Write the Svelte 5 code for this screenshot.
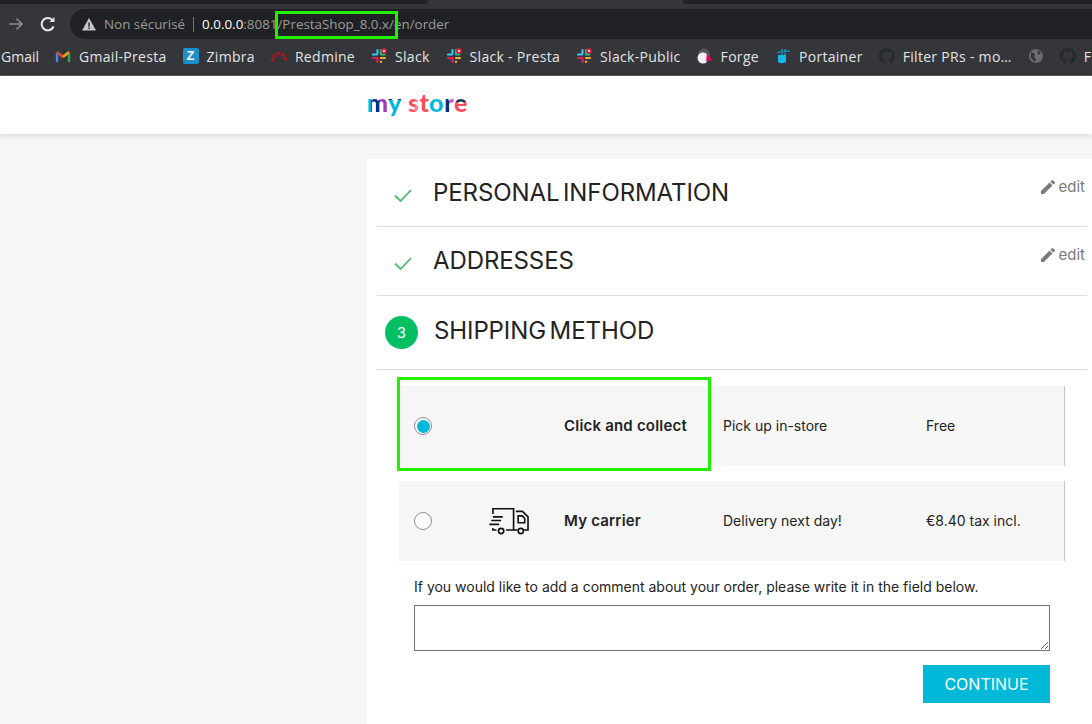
<script>
  const sections = [
    { title: 'PERSONAL INFORMATION', cls: 'first' },
    { title: 'ADDRESSES', cls: 'second' }
  ];
  // each letter of the logo is two-toned
  const logo = [
    ['m', 'linear-gradient(90deg, #00b9d8 20%, #0a2d8a 20% 62%, #a23cb0 62%)'],
    ['y', 'linear-gradient(180deg, #0a2d8a 45%, #00b9d8 45%)'],
    [' ', 'none'],
    ['s', 'linear-gradient(90deg, #ff4c5b 60%, #ff7fa0 60%)'],
    ['t', 'linear-gradient(180deg, #ff4c5b 100%, #ff4c5b 100%)'],
    ['o', 'linear-gradient(90deg, #00b9d8 100%, #00b9d8 100%)'],
    ['r', 'linear-gradient(90deg, #0a2d8a 50%, #c74fc0 50%)'],
    ['e', 'linear-gradient(180deg, #0d3550 50%, #ff4c5b 50%)']
  ];
  const bookmarks = [
    { icon: 'gmail', label: 'Gmail-Presta' },
    { icon: 'zimbra', label: 'Zimbra' },
    { icon: 'redmine', label: 'Redmine' },
    { icon: 'slack', label: 'Slack' },
    { icon: 'slack', label: 'Slack - Presta' },
    { icon: 'slack', label: 'Slack-Public' },
    { icon: 'forge', label: 'Forge' },
    { icon: 'portainer', label: 'Portainer' },
    { icon: 'github', label: 'Filter PRs - mo…' },
    { icon: 'globe', label: '' },
    { icon: 'github', label: 'F' }
  ];
</script>

<div class="page">
  <div class="browser">
    <div class="tabstrip">
      <div class="tab tab-left"></div>
      <div class="tab tab-right"></div>
    </div>
    <div class="toolbar">
      <svg class="nav" width="20" height="20" viewBox="0 0 20 20" fill="none" stroke="#8a8b8e" stroke-width="1.7">
        <path d="M3 10h13M10.500 4.500 16 10l-5.500 5.500" />
      </svg>
      <svg class="nav reload" width="20" height="20" viewBox="0 0 20 20" fill="none" stroke="#e8eaed" stroke-width="2">
        <path d="M15.600 12.500a6.200 6.200 0 1 1-.8-6.200" />
        <path d="M16.500 3v5h-5z" fill="#e8eaed" stroke="none" />
      </svg>
      <div class="omnibox">
        <svg width="16" height="16" viewBox="0 0 16 16"><path d="M8 2 15 14.500H1z" fill="#c4c6c9" /><path d="M7.300 6.500h1.400v4.200H7.300zM7.300 11.500h1.400v1.400H7.300z" fill="#202124" /></svg>
        <span class="insecure">Non sécurisé</span>
        <span class="sep"></span>
        <span class="url"><b>0.0.0.0</b>:8081/PrestaShop_8.0.x/en/order</span>
      </div>
    </div>
    <div class="bookmarks">
      <span class="bm-text cut">Gmail</span>
      {#each bookmarks as b}
        <div class="bookmark">
          {#if b.icon === 'gmail'}
            <svg width="16" height="16" viewBox="0 0 16 16" fill="none" stroke-width="2.400">
              <path d="M2 14V5" stroke="#4285f4" /><path d="M14 14V5" stroke="#34a853" />
              <path d="M2 4l6 5" stroke="#ea4335" /><path d="M8 9l6-5" stroke="#f0a020" />
            </svg>
          {:else if b.icon === 'zimbra'}
            <span class="zimbra">Z</span>
          {:else if b.icon === 'redmine'}
            <svg width="16" height="16" viewBox="0 0 16 16" fill="none" stroke="#b3151b" stroke-width="3" stroke-dasharray="3.500 1">
              <path d="M1.500 13.500a6.500 8 0 0 1 13 0" />
            </svg>
          {:else if b.icon === 'slack'}
            <svg width="16" height="16" viewBox="0 0 16 16" fill="none" stroke-width="2.200" stroke-linecap="round">
              <path d="M6.500 2v3.500M2 6.500h4" stroke="#36c5f0" />
              <path d="M2 10h4.500M6.500 10v4" stroke="#e01e5a" />
              <path d="M10 2v4.500M13.500 6.500H10" stroke="#2eb67d" />
              <path d="M10 10h4M10 14v-.5" stroke="#ecb22e" />
              <circle cx="13" cy="3" r="2.800" fill="#e01e3c" stroke="none" />
              <circle cx="13" cy="3" r="1" fill="#fff" stroke="none" />
            </svg>
          {:else if b.icon === 'forge'}
            <svg width="16" height="16" viewBox="0 0 16 16">
              <circle cx="7" cy="6.500" r="6" fill="#55575a" />
              <circle cx="6" cy="10" r="5.500" fill="#f2f2f2" />
              <circle cx="5" cy="6" r="1.500" fill="#f2f2f2" />
              <path d="M10 5l5 7-6 1.500z" fill="#df0067" />
            </svg>
          {:else if b.icon === 'portainer'}
            <svg width="16" height="16" viewBox="0 0 16 16" fill="none">
              <path d="M2 4.500 15 3M7 1v6M10 1v6" stroke="#13a3dc" stroke-width="1.200" />
              <path d="M3 7h8v6a2 2 0 0 1-2 2H5a2 2 0 0 1-2-2z" fill="#13b5ea" />
            </svg>
          {:else if b.icon === 'github'}
            <svg width="16" height="16" viewBox="0 0 16 16">
              <path fill="#24292e" d="M8 0C3.580 0 0 3.580 0 8c0 3.540 2.290 6.530 5.470 7.590.4.070.55-.17.55-.38 0-.19-.01-.82-.01-1.490-2.010.37-2.530-.49-2.690-.94-.09-.23-.48-.94-.82-1.130-.28-.15-.68-.52-.01-.53.63-.01 1.080.58 1.230.82.720 1.210 1.870.870 2.330.660.070-.520.280-.870.510-1.070-1.780-.2-3.640-.890-3.640-3.950 0-.870.310-1.590.820-2.150-.08-.2-.36-1.020.080-2.120 0 0 .670-.210 2.200.820.640-.180 1.320-.270 2-.270s1.360.090 2 .270c1.530-1.040 2.200-.820 2.200-.820.440 1.100.160 1.920.080 2.120.510.560.820 1.270.820 2.150 0 3.070-1.870 3.750-3.650 3.950.290.250.540.730.540 1.480 0 1.070-.01 1.930-.01 2.200 0 .210.150.460.550.380A8.010 8.010 0 0 0 16 8c0-4.420-3.580-8-8-8z" />
            </svg>
          {:else}
            <svg width="16" height="16" viewBox="0 0 16 16">
              <circle cx="8" cy="8" r="7" fill="#6a6c70" />
              <path d="M3 4l4 2-1 3 2 2-1 3-4-4zM10 2l3 3-3 2z" fill="#35363a" />
            </svg>
          {/if}
          {#if b.label}<span class="bm-text">{b.label}</span>{/if}
        </div>
      {/each}
    </div>
  </div>

  <header class="store-header">
    <div class="logo">{#each logo as [ch, paint]}<span style="background-image: {paint}">{ch}</span>{/each}</div>
  </header>

  <main class="content">
    <section class="card">
      {#each sections as s}
        <div class="step done {s.cls}">
          <svg class="check" width="20" height="20" viewBox="0 0 20 20" fill="none" stroke="#4cbb6c" stroke-width="1.800">
            <path d="M2 10.500l5.500 5.500L18 5" />
          </svg>
          <h1>{s.title}</h1>
          <span class="edit">
            <svg width="14" height="14" viewBox="3 3 18 18" fill="#7a7a7a">
              <path d="M3 17.250V21h3.750L17.810 9.940l-3.750-3.750L3 17.250zM20.710 7.040a1 1 0 0 0 0-1.410l-2.340-2.340a1 1 0 0 0-1.410 0l-1.830 1.830 3.750 3.750 1.830-1.830z" />
            </svg>
            edit
          </span>
        </div>
      {/each}

      <div class="step current">
        <span class="badge">3</span>
        <h1>SHIPPING METHOD</h1>
      </div>

      <div class="shipping">
        <div class="carrier">
          <span class="radio checked"></span>
          <span class="logo-cell"></span>
          <strong>Click and collect</strong>
          <span class="delay">Pick up in-store</span>
          <span class="price">Free</span>
        </div>
        <div class="carrier">
          <span class="radio"></span>
          <span class="logo-cell">
            <svg width="41" height="28" viewBox="280 95 125 85" fill="none" stroke="#111" stroke-width="5">
              <path d="M295 116v-16h63v65h-23M306 165h-11v-6" />
              <path d="M365 108h20l17 17v40h-12M370 165h-12" />
              <path d="M372 122h13l7 8v13h-20z" />
              <circle cx="320" cy="168" r="8" /><circle cx="380" cy="168" r="8" />
              <path d="M295 125h30M290 136h30M284 148h30" />
            </svg>
          </span>
          <strong>My carrier</strong>
          <span class="delay">Delivery next day!</span>
          <span class="price">€8.40 tax incl.</span>
        </div>
      </div>

      <form class="comment">
        <label for="delivery-message">If you would like to add a comment about your order, please write it in the field below.</label>
        <textarea id="delivery-message"></textarea>
        <button type="button">CONTINUE</button>
      </form>
    </section>
  </main>

  <!-- annotations drawn over the screenshot -->
  <div class="mark mark-url"></div>
  <div class="mark mark-carrier"></div>
</div>

<style>
  :global(body) {
    margin: 0;
    background: #f6f6f6;
  }
  .page {
    position: relative;
    width: 1092px;
    height: 724px;
    overflow: hidden;
    font-family: Inter, "Liberation Sans", sans-serif;
    color: #232323;
  }

  /* browser chrome */
  .browser {
    background: #35363a;
    height: 75px;
    display: flex;
    flex-direction: column;
    border-bottom: 1px solid #55565a;
  }
  .tabstrip {
    height: 9px;
    display: flex;
    justify-content: space-between;
  }
  .tab {
    height: 4px;
    background: #202124;
  }
  .tab-left {
    width: 428px;
    border-bottom-right-radius: 5px;
  }
  .tab-right {
    width: 409px;
    border-bottom-left-radius: 5px;
  }
  .toolbar {
    height: 30px;
    display: flex;
    align-items: center;
    padding-left: 6px;
  }
  .nav {
    flex-shrink: 0;
  }
  .reload {
    margin-left: 12px;
  }
  .omnibox {
    flex: 1;
    height: 30px;
    margin-left: 12px;
    padding-left: 11px;
    background: #202124;
    border-radius: 15px 0 0 15px;
    display: flex;
    align-items: center;
    font-family: "Open Sans", sans-serif;
    font-size: 13.400px;
    color: #9a9b9e;
  }
  .insecure {
    margin-left: 7px;
  }
  .sep {
    width: 1px;
    height: 15px;
    background: #75767a;
    margin: 0 8px 0 8px;
  }
  .url b {
    font-weight: 400;
    color: #fff;
  }
  .bookmarks {
    height: 36px;
    display: flex;
    align-items: center;
    gap: 16px;
    padding: 0 0 2px 1px;
    box-sizing: border-box;
    white-space: nowrap;
    overflow: hidden;
  }
  .bookmark {
    display: flex;
    align-items: center;
    gap: 8px;
    flex-shrink: 0;
  }
  .bm-text {
    font-family: "Open Sans", sans-serif;
    font-size: 14px;
    letter-spacing: 0.3px;
    color: #e3e4e6;
  }
  .bm-text.cut {
    letter-spacing: 0;
  }
  .zimbra {
    width: 16px;
    height: 16px;
    border-radius: 2px;
    background: #1b8fc9;
    color: #fff;
    font: 700 13px/16px "Liberation Sans", sans-serif;
    text-align: center;
  }

  /* store header */
  .store-header {
    height: 58px;
    background: #fff;
    box-shadow: 0 2px 5px rgba(0, 0, 0, 0.11);
    position: relative;
    padding-left: 367px;
    display: flex;
    align-items: center;
  }
  .logo {
    font-family: Lato, sans-serif;
    font-weight: 900;
    font-size: 25px;
    line-height: 1;
    letter-spacing: 0.5px;
    white-space: pre;
    margin-top: -6px;
  }
  .logo span {
    -webkit-background-clip: text;
    background-clip: text;
    color: transparent;
  }

  /* checkout */
  .content {
    padding: 25px 0 0 367px;
  }
  .card {
    background: #fff;
    padding: 0 5px 0 10px;
    height: 565px;
  }
  .step {
    display: flex;
    align-items: center;
    border-bottom: 1px solid #dedede;
    box-sizing: border-box;
    position: relative;
  }
  .step.first {
    height: 68px;
  }
  .step.second {
    height: 69px;
  }
  .step.current {
    height: 74px;
    padding-left: 8px;
  }
  .step.current h1 {
    margin-top: -3px;
  }
  .check {
    margin-left: 16px;
    margin-top: 4px;
  }
  h1 {
    margin: 0;
    font-size: 24px;
    font-weight: 400;
    letter-spacing: -0.1px;
    word-spacing: -3px;
    line-height: 1;
    color: #232323;
  }
  .done h1 {
    margin-left: 20px;
  }
  .current h1 {
    margin-left: 16px;
  }
  .badge {
    width: 33px;
    height: 33px;
    border-radius: 50%;
    background: #00bf63;
    color: #fff;
    font-size: 15px;
    line-height: 33px;
    text-align: center;
  }
  .edit {
    position: absolute;
    right: 2px;
    top: 18px;
    display: flex;
    align-items: center;
    gap: 4px;
    font-size: 15px;
    color: #7a7a7a;
  }
  .shipping {
    padding: 16px 22px 0 22px;
    display: flex;
    flex-direction: column;
    gap: 15px;
  }
  .carrier {
    height: 80px;
    background: #f6f6f6;
    border-right: 1px solid #c8c8c8;
    display: grid;
    grid-template-columns: 48px 102px 159px 203px 1fr;
    align-items: center;
    padding-left: 15px;
    font-size: 14px;
  }
  .radio {
    width: 16px;
    height: 16px;
    border: 1px solid #8f8f8f;
    border-radius: 50%;
    background: #fff;
    position: relative;
  }
  .radio.checked::after {
    content: '';
    position: absolute;
    inset: 1.500px;
    border-radius: 50%;
    background: #00b9d8;
  }
  .logo-cell {
    display: flex;
    margin-left: 26px;
  }
  .carrier strong {
    font-weight: 600;
    font-size: 15px;
    letter-spacing: 0.2px;
    margin-bottom: 2px;
  }
  .delay,
  .price {
    margin-bottom: 2px;
  }
  .comment {
    padding: 17px 37px 0;
    display: flex;
    flex-direction: column;
    align-items: flex-start;
  }
  .comment label {
    font-size: 14px;
    line-height: 18px;
  }
  textarea {
    display: block;
    width: 636px;
    height: 46px;
    margin-top: 9px;
    box-sizing: border-box;
    border: 1px solid #767676;
    background: #fff;
  }
  button {
    align-self: flex-end;
    width: 127px;
    height: 38px;
    margin-top: 14px;
    border: 0;
    background: #00b9d8;
    color: #fff;
    font-family: inherit;
    font-size: 16px;
  }

  .mark {
    position: absolute;
    box-sizing: border-box;
    border: 3px solid #22f000;
  }
  .mark-url {
    left: 275px;
    top: 11px;
    width: 123px;
    height: 28px;
  }
  .mark-carrier {
    left: 397px;
    top: 377px;
    width: 314px;
    height: 94px;
  }
</style>
